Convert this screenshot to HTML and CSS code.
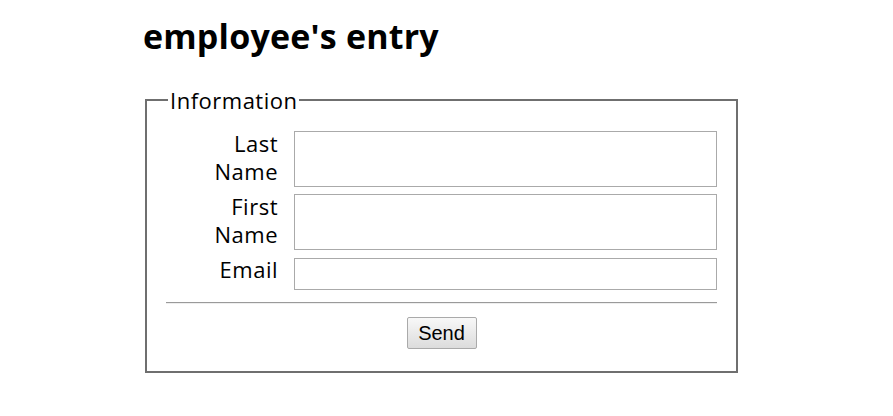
FILE: index.html
```html
<!DOCTYPE html>
<html>
<head>
<meta charset="utf-8">
<link rel="stylesheet" href="styles.css">
</head>
<body>
<div class="page">
  <h1 class="title">employee's entry</h1>
  <form class="form">
    <fieldset class="box">
      <legend class="legend">Information</legend>
      <div class="grid">
        <label class="label" for="ln">Last<br>Name</label>
        <textarea class="area" id="ln"></textarea>
        <label class="label" for="fn">First<br>Name</label>
        <textarea class="area" id="fn"></textarea>
        <label class="label" for="em">Email</label>
        <input class="field" id="em" type="text">
      </div>
      <hr class="rule">
      <div class="actions"><button class="btn" type="button">Send</button></div>
    </fieldset>
  </form>
</div>
</body>
</html>
```

FILE: styles.css
```css
html, body { margin: 0; padding: 0; background: #fff; }
body { font-family: "Open Sans", "DejaVu Sans", sans-serif; color: #000; }
.page { width: 593px; margin: 0 0 0 145px; padding-top: 14px; }
.title { font-size: 34px; font-weight: 700; margin: 0 0 0 -2px; line-height: 44px; letter-spacing: 0.2px; }
.form { margin-top: 28px; }
.box { margin: 0; border: 2px solid #6f6f6f; padding: 17px 19px 22px 19px; }
.legend { font-size: 22px; padding: 0 2px; margin-left: 2px; line-height: 28px; letter-spacing: 0.5px; }
.grid { display: grid; grid-template-columns: 112px 1fr; column-gap: 16px; row-gap: 7px; }
.label { text-align: right; font-size: 22px; line-height: 28px; letter-spacing: 0.5px; margin-top: -2px; }
.area, .field { box-sizing: border-box; border: 1px solid #aaa; margin: 0; padding: 2px; font: inherit; resize: none; }
.area { height: 56px; display: block; width: 100%; }
.field { height: 32px; width: 100%; margin-top: 1px; }
.rule { border: 0; border-top: 1px solid #9a9a9a; border-bottom: 1px solid #eee; margin: 12px 0 13px 0; height: 0; }
.actions { display: flex; justify-content: center; }
.btn { font-family: "Liberation Sans", Arial, sans-serif; font-size: 20px; width: 70px; height: 32px; border: 1px solid #aaa; border-radius: 2px; background: linear-gradient(#f8f8f8, #dcdcdc); color: #000; padding: 0; }
```
